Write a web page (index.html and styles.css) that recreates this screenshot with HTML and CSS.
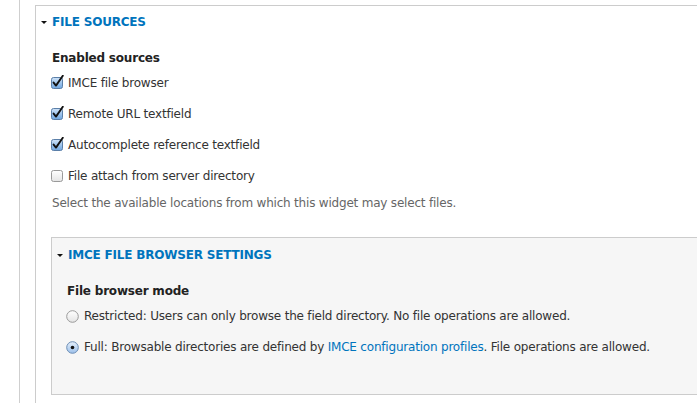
FILE: index.html
```html
<!DOCTYPE html>
<html>
<head>
<meta charset="utf-8">
<link rel="stylesheet" href="styles.css">
</head>
<body>
<div class="page">
  <div class="fieldset outer">
    <div class="legend"><span class="tri"></span><span class="legend-text">FILE SOURCES</span></div>
    <div class="group-label">Enabled sources</div>
    <div class="opt first">
      <svg class="cb" width="14" height="14" viewBox="0 0 14 14"><defs><linearGradient id="gc" x1="0" y1="0" x2="0" y2="1"><stop offset="0" stop-color="#cfe3f8"/><stop offset="1" stop-color="#6fa6e0"/></linearGradient></defs><rect x="0.5" y="2.5" width="11" height="11" rx="2" fill="url(#gc)" stroke="#5b7fa8"/><path d="M2.6 7.6 L5 10.6 L11.8 0.8" fill="none" stroke="#111" stroke-width="1.9" stroke-linecap="round" stroke-linejoin="round"/></svg>
      <span>IMCE file browser</span>
    </div>
    <div class="opt">
      <svg class="cb" width="14" height="14" viewBox="0 0 14 14"><rect x="0.5" y="2.5" width="11" height="11" rx="2" fill="url(#gc)" stroke="#5b7fa8"/><path d="M2.6 7.6 L5 10.6 L11.8 0.8" fill="none" stroke="#111" stroke-width="1.9" stroke-linecap="round" stroke-linejoin="round"/></svg>
      <span>Remote URL textfield</span>
    </div>
    <div class="opt">
      <svg class="cb" width="14" height="14" viewBox="0 0 14 14"><rect x="0.5" y="2.5" width="11" height="11" rx="2" fill="url(#gc)" stroke="#5b7fa8"/><path d="M2.6 7.6 L5 10.6 L11.8 0.8" fill="none" stroke="#111" stroke-width="1.9" stroke-linecap="round" stroke-linejoin="round"/></svg>
      <span>Autocomplete reference textfield</span>
    </div>
    <div class="opt">
      <svg class="cb" width="14" height="14" viewBox="0 0 14 14"><defs><linearGradient id="gu" x1="0" y1="0" x2="0" y2="1"><stop offset="0" stop-color="#ffffff"/><stop offset="1" stop-color="#e4e4e4"/></linearGradient></defs><rect x="0.5" y="2.5" width="11" height="11" rx="2" fill="url(#gu)" stroke="#9a9a9a"/></svg>
      <span>File attach from server directory</span>
    </div>
    <div class="desc">Select the available locations from which this widget may select files.</div>

    <div class="fieldset inner">
      <div class="legend"><span class="tri"></span><span class="legend-text">IMCE FILE BROWSER SETTINGS</span></div>
      <div class="group-label">File browser mode</div>
      <div class="opt radio-opt first">
        <svg class="rb" width="13" height="13" viewBox="0 0 13 13"><circle cx="6.5" cy="6.5" r="5.8" fill="url(#gu)" stroke="#9a9a9a"/></svg>
        <span>Restricted: Users can only browse the field directory. No file operations are allowed.</span>
      </div>
      <div class="opt radio-opt">
        <svg class="rb" width="13" height="13" viewBox="0 0 13 13"><defs><linearGradient id="gr" x1="0" y1="0" x2="0" y2="1"><stop offset="0" stop-color="#e6f0fb"/><stop offset="1" stop-color="#9cc0ea"/></linearGradient></defs><circle cx="6.5" cy="6.5" r="5.8" fill="url(#gr)" stroke="#6c8db5"/><circle cx="6.5" cy="6.5" r="1.8" fill="#111"/></svg>
        <span>Full: Browsable directories are defined by <a class="link" href="#">IMCE configuration profiles</a>. File operations are allowed.</span>
      </div>
    </div>
  </div>
</div>
</body>
</html>
```

FILE: styles.css
```css
html, body {
  margin: 0;
  padding: 0;
  background: #fff;
  overflow: hidden;
}
body {
  width: 697px;
  height: 403px;
  font-family: "DejaVu Sans", "Liberation Sans", sans-serif;
  font-size: 12px;
  letter-spacing: -0.2px;
  color: #333;
}
.page {
  margin-left: 19px;
  border-left: 1px solid #cfcfcf;
  padding-left: 15px;
  padding-top: 5px;
  height: 500px;
}
.fieldset {
  border: 1px solid #cccccc;
  border-right: none;
}
.outer {
  width: 800px;
  padding-left: 16px;
  padding-top: 1px;
  height: 600px;
}
.legend {
  height: 30px;
  display: flex;
  align-items: center;
  margin-left: -11px;
}
.tri {
  width: 0;
  height: 0;
  border-left: 3px solid transparent;
  border-right: 3px solid transparent;
  border-top: 3px solid #111;
  margin-right: 5px;
  margin-top: 1px;
}
.legend-text {
  color: #0074bd;
  font-weight: bold;
  font-size: 12px;
  letter-spacing: -0.2px;
  line-height: 18px;
}
.group-label {
  font-weight: bold;
  font-size: 12px;
  letter-spacing: -0.2px;
  color: #222;
  line-height: 18px;
  margin-top: 12px;
}
.opt {
  display: flex;
  align-items: center;
  height: 18px;
  line-height: 18px;
  margin-top: 13px;
  margin-left: -1px;
  white-space: nowrap;
}
.opt.first {
  margin-top: 7px;
}
.cb {
  margin-right: 3px;
  margin-top: -2px;
  flex: none;
}
.desc {
  color: #666;
  line-height: 18px;
  margin-top: 9px;
}
.inner {
  margin-top: 25px;
  background: #f6f6f6;
  padding-left: 15px;
  padding-bottom: 38px;
  margin-left: -1px;
}
.inner .legend {
  height: 33px;
  margin-left: -10px;
  padding-top: 1px;
  box-sizing: border-box;
}
.inner .group-label {
  margin-top: 11px;
}
.radio-opt.first {
  margin-top: 7px;
}
.rb {
  margin-right: 5px;
  flex: none;
}
.link {
  color: #0074bd;
  text-decoration: none;
}
```
